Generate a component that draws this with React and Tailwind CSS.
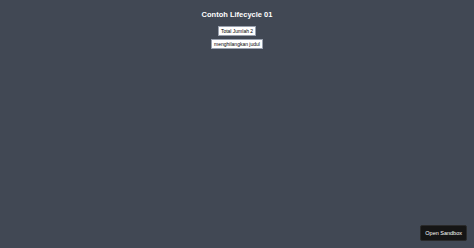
export default function App() {
  return (
    <div className="relative w-[474px] h-[248px] bg-[#414854] overflow-hidden" style={{ fontFamily: '"Liberation Sans", Arial, sans-serif' }}>
      <div className="flex flex-col items-center pt-[10px]">
        <h1 className="text-[7.5px] font-bold text-white leading-[9px]">Contoh Lifecycle 01</h1>
        <button className="mt-[7px] bg-white text-black text-[5px] leading-[6px] px-[2px] py-[1px] border border-gray-400">Total Jumlah 2</button>
        <button className="mt-[3px] bg-white text-black text-[5px] leading-[6px] px-[2px] py-[1px] border border-gray-400">menghilangkan judul</button>
      </div>
      <div className="absolute right-[7px] bottom-[7px] bg-[#151515] text-white text-[5.5px] leading-[6px] px-[4px] py-[4px] rounded-[2px] border border-[#2a2a2a]">Open Sandbox</div>
    </div>
  );
}
